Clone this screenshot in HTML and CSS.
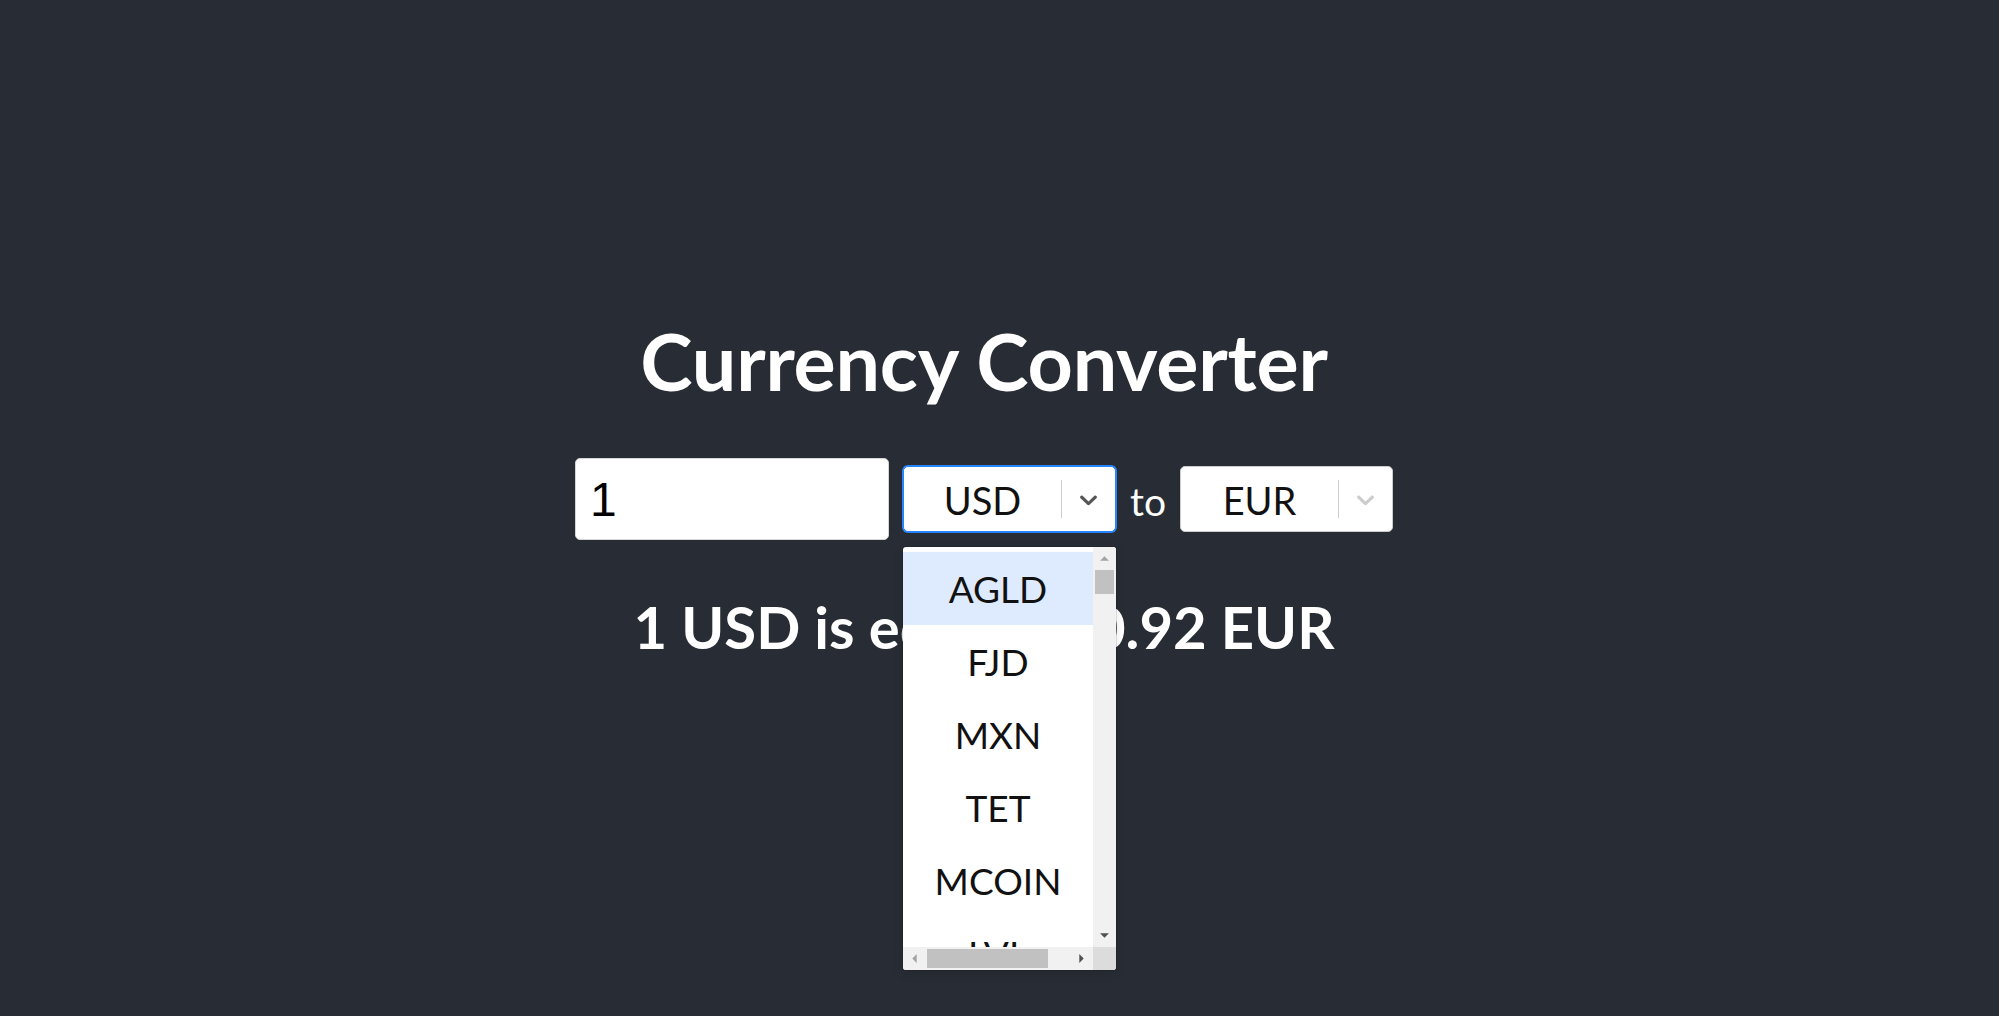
FILE: index.html
```html
<!DOCTYPE html>
<html lang="en">
<head>
<meta charset="utf-8">
<title>Currency Converter</title>
<link rel="stylesheet" href="styles.css">
</head>
<body>
<div class="app">
  <h1 class="title">Currency Converter</h1>
  <div class="controls">
    <input class="amount" type="text" value="1">
    <div class="select">
      <div class="control focused">
        <div class="value">USD</div>
        <span class="separator"></span>
        <div class="indicator">
          <svg viewBox="0 0 20 20" class="chevron dark"><path d="M4.516 7.548c0.436-0.446 1.043-0.481 1.576 0l3.908 3.747 3.908-3.747c0.533-0.481 1.141-0.446 1.574 0 0.436 0.445 0.408 1.197 0 1.615-0.406 0.418-4.695 4.502-4.695 4.502-0.217 0.223-0.502 0.335-0.787 0.335s-0.57-0.112-0.789-0.335c0 0-4.287-4.084-4.695-4.502s-0.436-1.170 0-1.615z"/></svg>
        </div>
      </div>
      <div class="menu">
        <div class="menu-list">
          <div class="option active">AGLD</div>
          <div class="option">FJD</div>
          <div class="option">MXN</div>
          <div class="option">TET</div>
          <div class="option">MCOIN</div>
          <div class="option">LVL</div>
        </div>
        <div class="vscroll">
          <div class="arrow-btn"><svg viewBox="0 0 10 10" class="arrow dim"><polygon points="1,7 9,7 5,3"/></svg></div>
          <div class="vtrack"><div class="vthumb"></div></div>
          <div class="arrow-btn"><svg viewBox="0 0 10 10" class="arrow"><polygon points="1,3 9,3 5,7"/></svg></div>
        </div>
        <div class="hscroll">
          <div class="arrow-btn"><svg viewBox="0 0 10 10" class="arrow dim"><polygon points="7,1 7,9 3,5"/></svg></div>
          <div class="htrack"><div class="hthumb"></div></div>
          <div class="arrow-btn"><svg viewBox="0 0 10 10" class="arrow"><polygon points="3,1 3,9 7,5"/></svg></div>
        </div>
        <div class="corner"></div>
      </div>
    </div>
    <span class="to">to</span>
    <div class="select">
      <div class="control">
        <div class="value">EUR</div>
        <span class="separator"></span>
        <div class="indicator">
          <svg viewBox="0 0 20 20" class="chevron light"><path d="M4.516 7.548c0.436-0.446 1.043-0.481 1.576 0l3.908 3.747 3.908-3.747c0.533-0.481 1.141-0.446 1.574 0 0.436 0.445 0.408 1.197 0 1.615-0.406 0.418-4.695 4.502-4.695 4.502-0.217 0.223-0.502 0.335-0.787 0.335s-0.57-0.112-0.789-0.335c0 0-4.287-4.084-4.695-4.502s-0.436-1.170 0-1.615z"/></svg>
        </div>
      </div>
    </div>
  </div>
  <h2 class="result">1 USD is equal to 0.92 EUR</h2>
</div>
</body>
</html>
```
FILE: styles.css
```css
html, body {
  margin: 0;
  padding: 0;
  background: #282c34;
}
body {
  width: 1999px;
  height: 1016px;
  overflow: hidden;
  font-family: Lato, "Open Sans", sans-serif;
  color: #ffffff;
}
.app {
  display: flex;
  flex-direction: column;
  align-items: center;
  padding-top: 312px;
  padding-right: 31px;
}
.title {
  margin: 0;
  font-size: 79px;
  line-height: 98px;
  font-weight: 700;
  letter-spacing: -0.2px;
}
.controls {
  margin-top: 48px;
  height: 82px;
  display: flex;
  align-items: center;
  gap: 14px;
}
.amount {
  box-sizing: border-box;
  width: 314px;
  height: 82px;
  margin: 0;
  padding: 0 14px;
  border: 1px solid #d6d6d6;
  border-radius: 5px;
  background: #fff;
  font-family: "Liberation Sans", Arial, sans-serif;
  font-size: 48px;
  color: #000;
  outline: none;
}
.select {
  position: relative;
  width: 213px;
}
.control {
  box-sizing: border-box;
  height: 66px;
  display: flex;
  align-items: center;
  background: #fff;
  border: 1px solid #cccccc;
  border-radius: 5px;
}
.control.focused {
  border-color: #2684ff;
  box-shadow: 0 0 0 1px #2684ff;
}
.value {
  flex: 1;
  text-align: center;
  font-size: 38px;
  color: #111;
  line-height: 64px;
  padding-top: 2px;
}
.separator {
  align-self: stretch;
  width: 1px;
  margin: 13px 0;
  background: #cccccc;
}
.indicator {
  width: 53px;
  display: flex;
  justify-content: center;
  align-items: center;
}
.chevron {
  width: 29px;
  height: 29px;
}
.chevron.dark { fill: #555555; }
.chevron.light { fill: #cccccc; }
.to {
  font-size: 39px;
  line-height: 66px;
  padding-top: 3px;
}
.menu {
  position: absolute;
  left: 0;
  top: 81px;
  width: 213px;
  height: 423px;
  background: #fff;
  border-radius: 3px;
  box-shadow: 0 0 0 1px rgba(0,0,0,0.1), 0 4px 11px rgba(0,0,0,0.1);
  display: grid;
  grid-template-columns: 1fr 23px;
  grid-template-rows: 1fr 23px;
  overflow: hidden;
  z-index: 5;
}
.menu-list {
  padding-top: 5px;
  overflow: hidden;
  min-height: 0;
}
.option {
  height: 73px;
  line-height: 73px;
  text-align: center;
  font-size: 37px;
  color: #111;
}
.option.active {
  background: #deebff;
}
.vscroll, .hscroll {
  background: #f1f1f1;
  display: flex;
}
.vscroll { flex-direction: column; }
.arrow-btn {
  width: 23px;
  height: 23px;
  display: flex;
  align-items: center;
  justify-content: center;
  flex: none;
}
.arrow {
  width: 11px;
  height: 11px;
  fill: #505050;
}
.arrow.dim { fill: #a3a3a3; }
.vtrack {
  flex: 1;
  padding: 0 2px;
}
.vthumb {
  height: 24px;
  background: #c1c1c1;
}
.htrack {
  flex: 1;
  padding: 2px 0 2px 1px;
}
.hthumb {
  width: 121px;
  height: 19px;
  background: #c1c1c1;
}
.corner {
  background: #dcdcdc;
}
.result {
  margin: 51px 0 0;
  font-size: 58px;
  line-height: 72px;
  font-weight: 700;
}
```
